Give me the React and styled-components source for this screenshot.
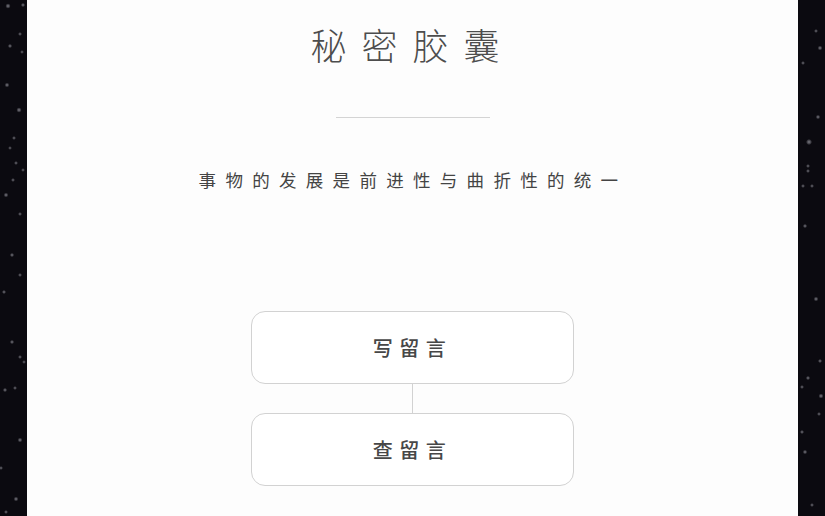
import React from "react";
import styled, { createGlobalStyle } from "styled-components";

const stars = [
  [8, 6, 1.6], [23, 5, 1.2], [20, 34, 1], [10, 46, 1.2], [22, 52, 0.9], [7, 85, 1.4], [19, 110, 1.6],
  [14, 138, 1], [10, 148, 0.9], [16, 163, 1], [23, 170, 0.9], [13, 180, 1], [6, 195, 1.4],
  [20, 214, 1], [12, 255, 1.2], [20, 275, 1], [4, 292, 1.1], [12, 342, 1.2], [20, 357, 1],
  [24, 362, 0.9], [5, 390, 1.2], [15, 388, 1], [20, 440, 1.4], [1, 468, 1], [16, 499, 1.4], [6, 512, 1],
  [816, 31, 1], [820, 48, 1.4], [803, 63, 1], [818, 117, 1.3], [809, 142, 2], [808, 166, 1], [808, 171, 1],
  [803, 186, 1], [812, 186, 1], [805, 226, 1.2], [816, 299, 1.4], [820, 361, 1.1], [808, 378, 1.2],
  [802, 387, 1], [821, 396, 1.5], [819, 414, 1], [802, 432, 1.1], [805, 452, 1.3], [812, 505, 1],
];

const starBg = stars
  .map(
    ([x, y, r]) =>
      `radial-gradient(circle at ${x}px ${y}px, rgba(200,200,210,0.6) 0, rgba(200,200,210,0.25) ${r}px, transparent ${r + 1}px)`
  )
  .join(", ");

const GlobalStyle = createGlobalStyle`
  html, body {
    margin: 0;
    padding: 0;
    height: 100%;
    background: #0b0a10;
  }
  #root { height: 100%; }
`;

const Page = styled.div`
  width: 825px;
  height: 516px;
  overflow: hidden;
  display: flex;
  background-color: #0b0a10;
  background-image: ${starBg};
  background-repeat: no-repeat;
`;

const Card = styled.main`
  margin-left: 27px;
  width: 771px;
  height: 516px;
  background: #fdfdfd;
  display: flex;
  flex-direction: column;
  align-items: center;
  font-family: "Noto Sans CJK SC", "Noto Sans", sans-serif;
`;

const Title = styled.h1`
  margin: 22px 0 0 0;
  font-size: 36px;
  line-height: 44px;
  font-weight: 300;
  letter-spacing: 15px;
  color: #4d4d4d;
`;

const Divider = styled.hr`
  margin: 51px 0 0;
  width: 154px;
  height: 0;
  border: none;
  border-top: 1.5px solid #d4d4d4;
`;

const Motto = styled.p`
  margin: 50px 0 0 1px;
  font-size: 17.5px;
  line-height: 24px;
  font-weight: 400;
  letter-spacing: 9.3px;
  color: #444;
`;

const Actions = styled.nav`
  margin-top: 119px;
  display: flex;
  flex-direction: column;
  align-items: center;
`;

const ActionButton = styled.button`
  width: 323px;
  height: 73px;
  box-sizing: border-box;
  border: 1.5px solid #d2d2d2;
  border-radius: 14px;
  background: #fff;
  font-family: inherit;
  font-size: 20px;
  font-weight: 500;
  letter-spacing: 6.5px;
  padding-left: 6px;
  color: #474747;
  cursor: pointer;
`;

const Connector = styled.span`
  display: block;
  width: 1.5px;
  height: 29px;
  background: #d2d2d2;
`;

export default function App() {
  return (
    <>
      <GlobalStyle />
      <Page>
        <Card>
          <Title>秘密胶囊</Title>
          <Divider />
          <Motto>事物的发展是前进性与曲折性的统一</Motto>
          <Actions>
            <ActionButton>写留言</ActionButton>
            <Connector />
            <ActionButton>查留言</ActionButton>
          </Actions>
        </Card>
      </Page>
    </>
  );
}
